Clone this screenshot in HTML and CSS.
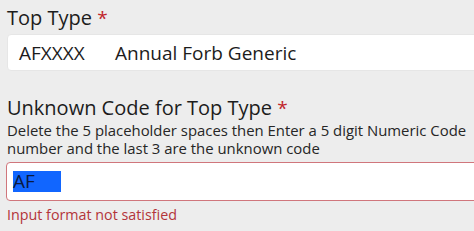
FILE: index.html
```html
<!DOCTYPE html>
<html>
<head>
<meta charset="utf-8">
<link rel="stylesheet" href="styles.css">
</head>
<body>
<div class="form">
  <div class="field">
    <div class="label">Top Type <span class="req">*</span></div>
    <div class="box"><span class="code">AFXXXX</span><span class="name">Annual Forb Generic</span></div>
  </div>
  <div class="field second">
    <div class="label">Unknown Code for Top Type <span class="req">*</span></div>
    <div class="hint">Delete the 5 placeholder spaces then Enter a 5 digit Numeric Code number and the last 3 are the unknown code</div>
    <div class="box error"><span class="sel">AF&nbsp;&nbsp;&nbsp;&nbsp;&nbsp;</span></div>
    <div class="msg">Input format not satisfied</div>
  </div>
</div>
</body>
</html>
```
FILE: styles.css
```css
html, body {
  margin: 0;
  padding: 0;
  background: #ededed;
  overflow: hidden;
}
body {
  font-family: "Open Sans", Lato, sans-serif;
  color: #1c1c1c;
}
.form {
  padding: 4px 0 0 7px;
}
.label {
  font-size: 20px;
  line-height: 28px;
  color: #1c1c1c;
}
.req {
  color: #c0262c;
  font-size: 19px;
}
.box {
  margin-top: 2px;
  width: calc(100% + 6px);
  height: 37px;
  box-sizing: border-box;
  background: #fff;
  border: 1px solid #e6e6e6;
  border-radius: 4px;
  display: flex;
  align-items: center;
  padding-left: 11px;
  font-size: 19px;
  color: #1c1c1c;
}
.code {
  width: 96px;
}
.second {
  margin-top: 23px;
}
.hint {
  font-size: 14.9px;
  line-height: 18px;
  color: #262626;
  margin-top: -1px;
  padding-right: 0;
}
.box.error {
  margin-top: 5px;
  margin-left: -1px;
  height: 39px;
  border: 1.5px solid #d0767c;
  padding-left: 6px;
}
.sel {
  background: #1166ff;
  color: #0a1a40;
  height: 21px;
  line-height: 21px;
  font-size: 19px;
  margin-top: 0;
  padding-right: 1px;
}
.msg {
  margin-top: 4px;
  font-size: 14.3px;
  color: #b3343a;
}
```
